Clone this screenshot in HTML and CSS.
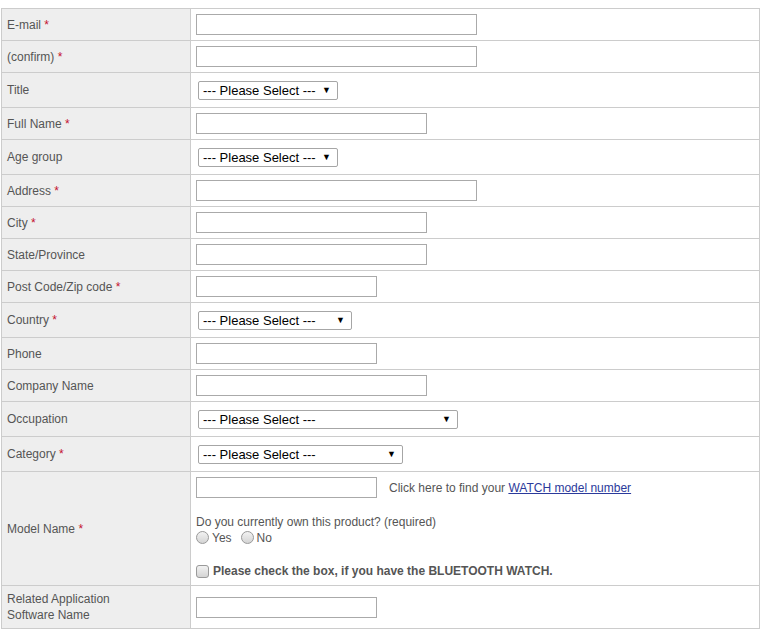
FILE: index.html
```html
<!DOCTYPE html>
<html lang="en">
<head>
    <meta charset="UTF-8">
    <meta name="viewport" content="width=device-width, initial-scale=1.0">
    <title>Product Registration</title>
    <link rel="stylesheet" href="styles.css">
</head>
<body>
    <form id="register-form">
        <table class="form-table">
            <tr>
                <td class="label">E-mail <span class="req">*</span></td>
                <td class="field"><input type="text" class="w-lg" name="email"></td>
            </tr>
            <tr>
                <td class="label">(confirm) <span class="req">*</span></td>
                <td class="field"><input type="text" class="w-lg" name="email-confirm"></td>
            </tr>
            <tr>
                <td class="label">Title</td>
                <td class="field"><span class="sel"><select class="s-sm" name="title"><option>--- Please Select ---</option></select></span></td>
            </tr>
            <tr>
                <td class="label">Full Name <span class="req">*</span></td>
                <td class="field"><input type="text" class="w-md" name="full-name"></td>
            </tr>
            <tr>
                <td class="label">Age group</td>
                <td class="field"><span class="sel"><select class="s-sm" name="age"><option>--- Please Select ---</option></select></span></td>
            </tr>
            <tr>
                <td class="label">Address <span class="req">*</span></td>
                <td class="field"><input type="text" class="w-lg" name="address"></td>
            </tr>
            <tr>
                <td class="label">City <span class="req">*</span></td>
                <td class="field"><input type="text" class="w-md" name="city"></td>
            </tr>
            <tr>
                <td class="label">State/Province</td>
                <td class="field"><input type="text" class="w-md" name="state"></td>
            </tr>
            <tr>
                <td class="label">Post Code/Zip code <span class="req">*</span></td>
                <td class="field"><input type="text" class="w-sm" name="zip"></td>
            </tr>
            <tr>
                <td class="label">Country <span class="req">*</span></td>
                <td class="field"><span class="sel"><select class="s-country" name="country"><option>--- Please Select ---</option></select></span></td>
            </tr>
            <tr>
                <td class="label">Phone</td>
                <td class="field"><input type="text" class="w-sm" name="phone"></td>
            </tr>
            <tr>
                <td class="label">Company Name</td>
                <td class="field"><input type="text" class="w-md" name="company"></td>
            </tr>
            <tr>
                <td class="label">Occupation</td>
                <td class="field"><span class="sel"><select class="s-lg" name="occupation"><option>--- Please Select ---</option></select></span></td>
            </tr>
            <tr>
                <td class="label">Category <span class="req">*</span></td>
                <td class="field"><span class="sel"><select class="s-md" name="category"><option>--- Please Select ---</option></select></span></td>
            </tr>
            <tr>
                <td class="label">Model Name <span class="req">*</span></td>
                <td class="field">
                    <div class="model-line">
                        <input type="text" class="w-sm" name="model">
                        <span class="hint">Click here to find your <a href="#">WATCH model number</a></span>
                    </div>
                    <p class="question">Do you currently own this product? (required)</p>
                    <div class="radios">
                        <label><input type="radio" name="own" value="yes"> Yes</label>
                        <label><input type="radio" name="own" value="no"> No</label>
                    </div>
                    <label class="check"><input type="checkbox" name="bluetooth"> Please check the box, if you have the BLUETOOTH WATCH.</label>
                </td>
            </tr>
            <tr>
                <td class="label">Related Application<br>Software Name</td>
                <td class="field"><input type="text" class="w-sm" name="software"></td>
            </tr>
        </table>
    </form>
</body>
</html>
```

FILE: styles.css
```css
body {
    margin: 8px 0 0 1px;
    font-family: "Liberation Sans", Arial, sans-serif;
    font-size: 12px;
    color: #555;
    background: #fff;
}
.form-table {
    width: 759px;
    border-collapse: collapse;
    border: 1px solid #ccc;
}
.form-table td {
    border: 1px solid #ccc;
    padding: 5px;
    vertical-align: middle;
}
.form-table td.label {
    width: 177px;
    padding: 5px 6px 5px 5px;
    background-color: #eee; /* grey label column */
    line-height: 16px;
}
.req {
    color: #c4122f;
}
input[type="text"] {
    display: block;
    box-sizing: border-box;
    height: 21px;
    margin: 0;
    padding: 1px 3px;
    border: 1px solid #aaa;
    font-family: inherit;
    font-size: 12px;
}
.w-lg { width: 281px; }
.w-md { width: 231px; }
.w-sm { width: 181px; }

/* selects with the small black arrow */
.sel {
    position: relative;
    display: inline-block;
    margin: 3px 0 2px 2px;
    vertical-align: top;
}
.sel::after {
    content: "\25BC";
    position: absolute;
    right: 7px;
    top: 4px;
    font-size: 9px;
    color: #000;
    pointer-events: none;
}
select {
    display: block;
    box-sizing: border-box;
    height: 19px;
    margin: 0;
    padding: 0 0 0 4px;
    border: 1px solid #a6a6a6;
    border-radius: 2px;
    background: #fff;
    color: #000;
    font-family: "Liberation Sans", Arial, sans-serif;
    font-size: 13px;
    -webkit-appearance: none;
    appearance: none;
}
.s-sm { width: 140px; }
.s-country { width: 154px; }
.s-md { width: 205px; }
.s-lg { width: 260px; }

/* model name block */
.model-line {
    display: flex;
    align-items: center;
    gap: 12px;
}
.hint a {
    color: #2b3a9b;
}
.question {
    margin: 17px 0 0;
    line-height: 14px;
}
.radios {
    display: flex;
    gap: 9px;
    height: 17px;
    align-items: center;
    font-size: 12px;
}
.radios label, .check {
    display: flex;
    align-items: center;
    gap: 3px;
}
input[type="radio"], input[type="checkbox"] {
    -webkit-appearance: none;
    appearance: none;
    width: 13px;
    height: 13px;
    margin: 0;
    border: 1px solid #9a9a9a;
    background: linear-gradient(#f2f2f2, #d4d4d4);
}
input[type="radio"] {
    border-radius: 50%;
}
input[type="checkbox"] {
    border-radius: 3px;
}
.check {
    margin-top: 16px;
    height: 18px;
    gap: 4px;
    font-weight: bold;
}
```
